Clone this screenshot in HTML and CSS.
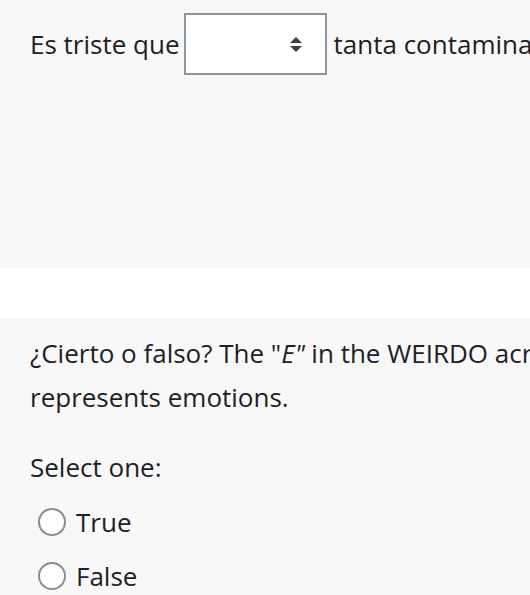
FILE: index.html
```html
<!DOCTYPE html>
<html lang="es">
<head>
<meta charset="utf-8">
<link rel="stylesheet" href="styles.css">
</head>
<body>
<div class="page">
  <section class="q1">
    <p class="line">Es triste que <span class="select"><span class="arrows"><svg width="12" height="15" viewBox="0 0 12 15"><path d="M6 0 L12 6 L0 6 Z" fill="#3c3f44"/><path d="M0 9 L12 9 L6 15 Z" fill="#3c3f44"/></svg></span></span> tanta contaminación</p>
  </section>
  <div class="band"></div>
  <section class="q2">
    <p class="qtext">¿Cierto o falso? The "<em>E"</em> in the WEIRDO acronym represents emotions.</p>
    <p class="prompt">Select one:</p>
    <div class="opt"><span class="radio"></span><span>True</span></div>
    <div class="opt"><span class="radio"></span><span>False</span></div>
  </section>
</div>
</body>
</html>
```
FILE: styles.css
```css
html, body {
  margin: 0;
  padding: 0;
}
body {
  background: #f8f8f8;
  font-family: "Open Sans", "Liberation Sans", sans-serif;
  color: #1d2125;
  font-size: 26px;
  width: 530px;
  height: 595px;
  overflow: hidden;
}
.page {
  width: 700px;
}
.q1 {
  height: 268px;
  padding: 13px 0 0 30px;
  box-sizing: border-box;
}
.line {
  margin: 0;
  white-space: nowrap;
  display: flex;
  align-items: center;
  gap: 4px;
}
.select {
  display: inline-flex;
  align-items: center;
  justify-content: flex-end;
  width: 143px;
  height: 62px;
  box-sizing: border-box;
  border: 2px solid #8f959e;
  background: #fff;
  padding-right: 23px;
  margin-right: 3px;
}
.arrows svg { display: block; }
.band {
  height: 51px;
  background: #fff;
}
.q2 {
  padding: 12px 0 0 30px;
}
.qtext {
  margin: 0;
  line-height: 44px;
  width: 620px;
}
.prompt {
  margin: 26px 0 6px 0;
  line-height: 44px;
}
.opt {
  display: flex;
  align-items: center;
  gap: 10px;
  margin-left: 8px;
  height: 54px;
}
.radio {
  width: 28px;
  height: 28px;
  border: 2px solid #8a8d91;
  border-radius: 50%;
  box-sizing: border-box;
  background: #fff;
}
```
